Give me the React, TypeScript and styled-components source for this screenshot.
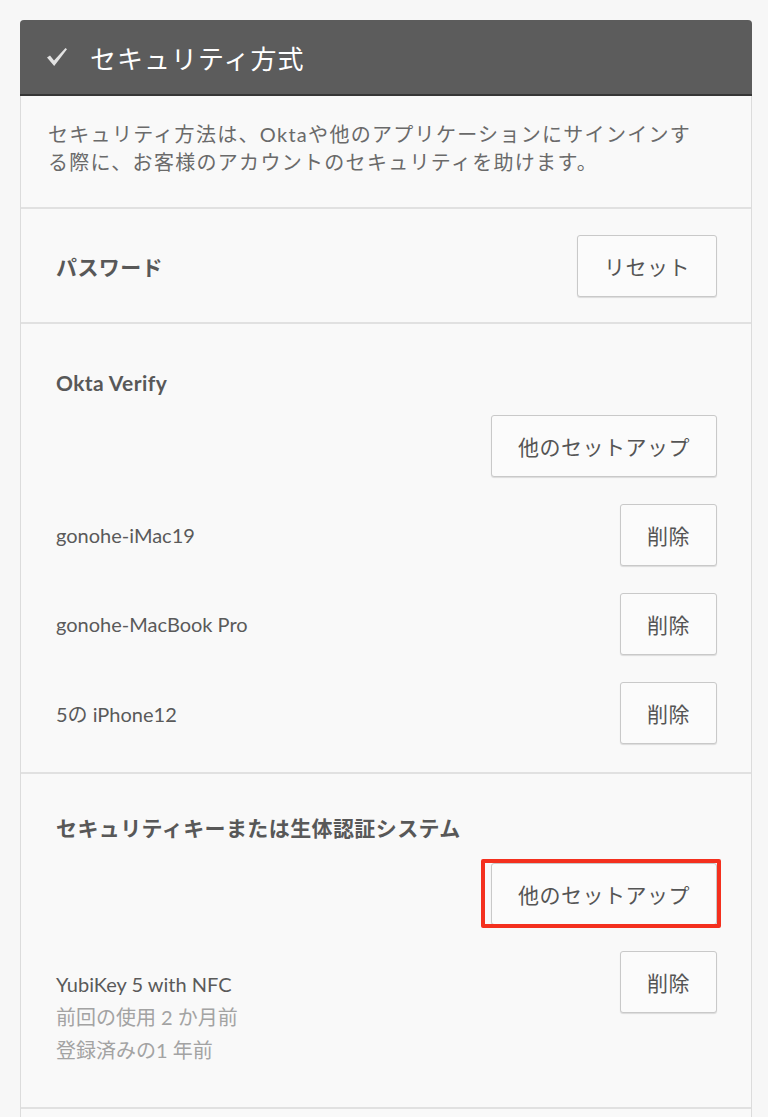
import React from 'react';
import styled, { createGlobalStyle } from 'styled-components';

const GlobalStyle = createGlobalStyle`
  html, body {
    margin: 0;
    padding: 0;
    background: #f7f7f7;
  }
  body {
    font-family: Lato, "Noto Sans CJK JP", sans-serif;
    color: #5d5d5d;
  }
`;

const Page = styled.div`
  padding: 20px 16px 0 20px;
  height: 1117px;
  box-sizing: border-box;
  overflow: hidden;
`;

const Panel = styled.div`
  width: 732px;
  box-sizing: border-box;
  background: #f9f9f9;
  border: 1px solid #dcdcdc;
  border-top: none;
  border-radius: 4px 4px 0 0;
`;

const Header = styled.div`
  height: 74px;
  display: flex;
  align-items: center;
  gap: 22px;
  padding-left: 26px;
  margin: 0 -1px;
  background: #5c5c5c;
  border-bottom: 2px solid #363636;
  border-radius: 4px 4px 0 0;
`;

const HeaderTitle = styled.h2`
  margin: 0;
  font-size: 26px;
  font-weight: 400;
  color: #fff;
  letter-spacing: 1px;
`;

const Section = styled.section<{ $pad?: string }>`
  padding: ${(p) => p.$pad || '27px 35px 27px 35px'};
  border-bottom: 2px solid #e1e1e1;
  display: flex;
  flex-direction: column;
`;

const Description = styled.p`
  margin: 0;
  font-size: 20px;
  line-height: 28px;
  color: #6a6a6a;
  letter-spacing: 1.3px;
`;

const Row = styled.div<{ $align?: string }>`
  display: flex;
  justify-content: space-between;
  align-items: ${(p) => p.$align || 'center'};
  min-height: 62px;
`;

const Title = styled.h3`
  margin: 0;
  font-size: 21px;
  font-weight: 700;
  color: #585858;
  letter-spacing: 0.4px;
`;

const Name = styled.div`
  font-size: 20px;
  color: #5a5a5a;
`;

const Info = styled.div`
  padding-top: 17px;
  display: flex;
  flex-direction: column;
  font-size: 20px;
  line-height: 33px;
  color: #5a5a5a;
`;

const Muted = styled.span`
  color: #a3a3a3;
`;

const Button = styled.button`
  height: 62px;
  padding: 0 26px;
  background: #fbfbfb;
  border: 1px solid #c9c9c9;
  border-radius: 3px;
  box-shadow: 0 1px 1px rgba(0, 0, 0, 0.12);
  font-family: Lato, "Noto Sans CJK JP", sans-serif;
  font-size: 21px;
  color: #555;
  letter-spacing: 0.5px;
  cursor: pointer;
`;

const ActionRow = styled.div<{ $mt?: number }>`
  display: flex;
  justify-content: flex-end;
  margin-top: ${(p) => p.$mt ?? 0}px;
`;

const List = styled.div<{ $mt: number }>`
  display: flex;
  flex-direction: column;
  gap: 27px;
  margin-top: ${(p) => p.$mt}px;
`;

const Highlight = styled.span`
  position: relative;
  display: inline-flex;
  &::after {
    content: '';
    position: absolute;
    top: -4px;
    bottom: -3px;
    left: -10px;
    right: -4px;
    border: 4px solid #f4301e;
    border-radius: 2px;
    pointer-events: none;
  }
`;

const Check = () => (
  <svg width="22" height="20" viewBox="0 0 22 20">
    <path
      d="M1 10.5 L4 8.5 L8 13.5 L19.5 1 L21 2.2 L8.2 19 Z"
      fill="#e2e2e2"
    />
  </svg>
);

const devices = ['gonohe-iMac19', 'gonohe-MacBook Pro', '5の iPhone12'];

export default function App() {
  return (
    <Page>
      <GlobalStyle />
      <Panel>
        <Header>
          <Check />
          <HeaderTitle>セキュリティ方式</HeaderTitle>
        </Header>

        <Section $pad="24px 40px 31px 27px">
          <Description>
            セキュリティ方法は、Oktaや他のアプリケーションにサインインする際に、お客様のアカウントのセキュリティを助けます。
          </Description>
        </Section>

        <Section $pad="26px 34px 25px 35px">
          <Row>
            <Title>パスワード</Title>
            <Button>リセット</Button>
          </Row>
        </Section>

        <Section $pad="27px 34px 28px 35px">
          <Row>
            <Title>Okta Verify</Title>
          </Row>
          <ActionRow $mt={2}>
            <Button>他のセットアップ</Button>
          </ActionRow>
          <List $mt={27}>
            {devices.map((d) => (
              <Row key={d}>
                <Name>{d}</Name>
                <Button>削除</Button>
              </Row>
            ))}
          </List>
        </Section>

        <Section $pad="22px 34px 40px 35px">
          <Row>
            <Title>セキュリティキーまたは生体認証システム</Title>
          </Row>
          <ActionRow $mt={5}>
            <Highlight>
              <Button>他のセットアップ</Button>
            </Highlight>
          </ActionRow>
          <List $mt={26}>
            <Row $align="flex-start">
              <Info>
                <span>YubiKey 5 with NFC</span>
                <Muted>前回の使用 2 か月前</Muted>
                <Muted>登録済みの1 年前</Muted>
              </Info>
              <Button>削除</Button>
            </Row>
          </List>
        </Section>

        <Section $pad="27px 34px 27px 35px">
          <Row />
        </Section>
      </Panel>
    </Page>
  );
}
